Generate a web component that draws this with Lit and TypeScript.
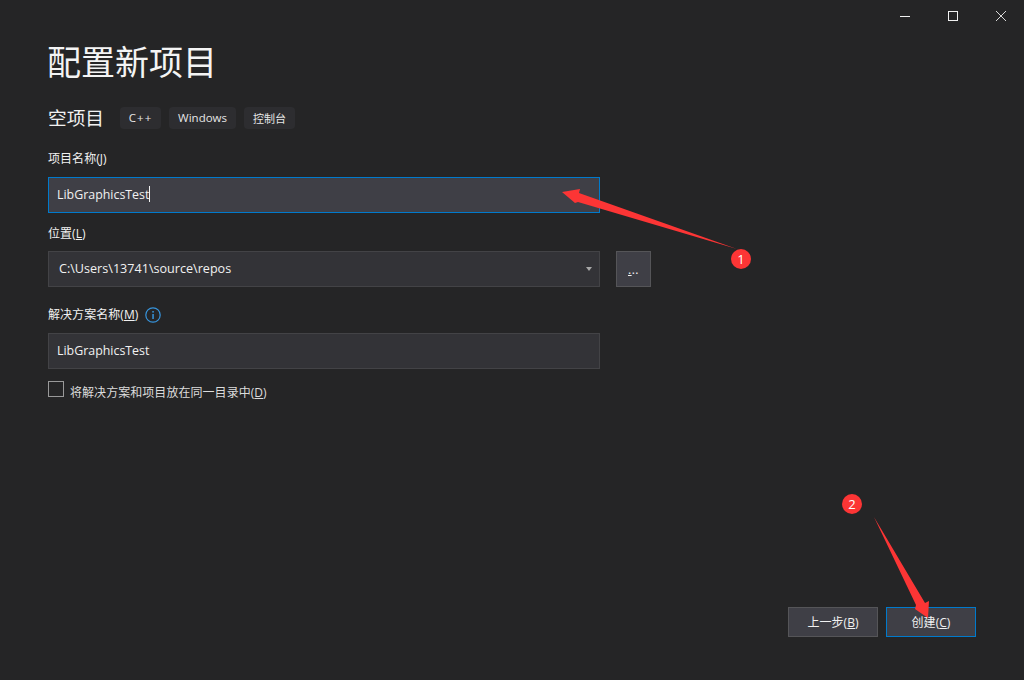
import { LitElement, html, css, svg } from "lit";
import { customElement } from "lit/decorators.js";

@customElement("app-root")
export class AppRoot extends LitElement {
  static styles = css`
    :host {
      display: block;
      position: relative;
      width: 1024px;
      height: 680px;
      overflow: hidden;
      background: #252526;
      color: #f1f1f1;
      font-family: "Open Sans", "Noto Sans CJK SC", sans-serif;
      font-size: 12px;
    }
    * { box-sizing: border-box; }
    .cjk { font-family: "Noto Sans CJK SC", sans-serif; }
    .page {
      display: flex;
      flex-direction: column;
      height: 680px;
    }
    .winbar {
      display: flex;
      justify-content: flex-end;
      height: 31px;
      padding: 11px 18px 0 0;
      gap: 38px;
    }
    .winbar svg { width: 10px; height: 10px; display: block; }
    .body {
      flex: 1;
      display: flex;
      flex-direction: column;
      padding: 0 0 0 48px;
    }
    h1 {
      margin: 0 0 0 -1px;
      height: 60px;
      line-height: 60px;
      font-size: 34px;
      font-weight: 400;
      color: #f4f4f4;
    }
    .sub {
      display: flex;
      align-items: center;
      height: 22px;
      margin-top: 16px;
      gap: 8px;
    }
    .sub .name {
      font-size: 18.7px;
      font-weight: 400;
      margin-right: 8px;
      line-height: 22px;
      margin-top: -2px;
    }
    .tag {
      height: 22px;
      padding: 0 9px;
      display: flex;
      align-items: center;
      justify-content: center;
      background: #2d2d30;
      border-radius: 4px;
      font-size: 11.5px;
      color: #e6e6e6;
      margin-top: -1px;
    }
    .tag.plus { width: 41px; letter-spacing: 1px; padding: 0; }
    .tag.win { width: 67px; padding: 0; }
    .tag.ctl { width: 51px; padding: 0; font-size: 11px; }
    .label {
      display: flex;
      align-items: center;
      gap: 6px;
      font-size: 12px;
      color: #f1f1f1;
      line-height: 18px;
      height: 18px;
    }
    .label > span, .check > span:last-child, .btn { letter-spacing: 0.05px; }
    .l1 { margin-top: 21px; }
    .l2 { margin-top: 12px; }
    .l3 { margin-top: 19px; gap: 7px; }
    .field {
      width: 552px;
      height: 36px;
      display: flex;
      align-items: center;
      padding: 0 8px 2px;
      background: #333337;
      border: 1px solid #434346;
      font-size: 12.4px;
      color: #f1f1f1;
    }
    .f1 { margin-top: 9px; background: #3f3f46; border-color: #007acc; }
    .f2 { margin-top: 8px; padding: 0 7px 2px 10px; justify-content: space-between; font-size: 12.6px; }
    .f3 { margin-top: 9px; }
    .caret { width: 1px; height: 16px; background: #f1f1f1; }
    .path-row { display: flex; gap: 16px; }
    .tri { width: 0; height: 0; border: 3.5px solid transparent; border-top: 4px solid #a8a8a8; border-bottom: 0; margin-top: 2px; }
    .browse {
      width: 35px;
      height: 36px;
      margin-top: 8px;
      background: #3f3f46;
      border: 1px solid #555558;
      display: flex;
      align-items: flex-end;
      justify-content: center;
      padding-bottom: 10px;
      font-size: 12px;
      line-height: 12px;
      letter-spacing: 0.5px;
      color: #f1f1f1;
    }
    .info { width: 16px; height: 16px; display: block; }
    .check {
      display: flex;
      align-items: center;
      margin-top: 12px;
      height: 16px;
      gap: 6px;
      color: #dcdcdc;
    }
    .check > span:last-child { margin-top: 5px; }
    .box { width: 16px; height: 16px; border: 1px solid #999; }
    .actions {
      display: flex;
      gap: 8px;
      justify-content: flex-end;
      padding: 0 48px 43px 0;
    }
    .btn {
      width: 90px;
      height: 30px;
      display: flex;
      align-items: center;
      justify-content: center;
      background: #3f3f46;
      border: 1px solid #555558;
      font-size: 12px;
      color: #f1f1f1;
      white-space: pre;
    }
    .btn.primary { border-color: #007acc; }
    .spacer { flex: 1; }
    .overlay {
      position: absolute;
      inset: 0;
      width: 1024px;
      height: 680px;
      pointer-events: none;
    }
    .overlay text {
      font-family: "Open Sans", sans-serif;
      font-size: 13px;
      fill: #fff;
      text-anchor: middle;
    }
  `;

  render() {
    return html`
      <div class="page">
        <div class="winbar">
          <svg viewBox="0 0 10 10"><path d="M0 5.5H10" stroke="#f1f1f1" fill="none"/></svg>
          <svg viewBox="0 0 10 10"><rect x=".5" y=".5" width="9" height="9" stroke="#f1f1f1" fill="none"/></svg>
          <svg viewBox="0 0 10 10"><path d="M0 0L10 10M10 0L0 10" stroke="#d8d8d8" fill="none"/></svg>
        </div>
        <div class="body">
          <h1 class="cjk">配置新项目</h1>
          <div class="sub">
            <span class="name cjk">空项目</span>
            <span class="tag plus">C++</span>
            <span class="tag win">Windows</span>
            <span class="tag ctl cjk">控制台</span>
          </div>
          <div class="label l1"><span>项目名称(<u>J</u>)</span></div>
          <div class="field f1"><span>LibGraphicsTest</span><span class="caret"></span></div>
          <div class="label l2"><span>位置(<u>L</u>)</span></div>
          <div class="path-row">
            <div class="field f2"><span>C:\\Users\\13741\\source\\repos</span><span class="tri"></span></div>
            <div class="browse"><span><u>.</u>..</span></div>
          </div>
          <div class="label l3">
            <span>解决方案名称(<u>M</u>)</span>
            <svg class="info" viewBox="0 0 16 16">
              <circle cx="8" cy="8" r="7.2" fill="none" stroke="#3794dc" stroke-width="1.2"/>
              <rect x="7.3" y="7" width="1.5" height="5" fill="#3794dc"/>
              <rect x="7.3" y="4" width="1.5" height="1.6" fill="#3794dc"/>
            </svg>
          </div>
          <div class="field f3">LibGraphicsTest</div>
          <div class="check">
            <span class="box"></span>
            <span>将解决方案和项目放在同一目录中(<u>D</u>)</span>
          </div>
          <div class="spacer"></div>
          <div class="actions">
            <div class="btn"><span>上一步(<u>B</u>)</span></div>
            <div class="btn primary"><span>创建(<u>C</u>)</span></div>
          </div>
        </div>
      </div>
      <svg class="overlay" viewBox="0 0 1024 680">
        ${svg`
          <polygon points="737,249 578,202 575,203 562,192 580,189 579,193" fill="#fc3535"/>
          <circle cx="741" cy="259" r="10" fill="#fc3535"/>
          <text x="741" y="264">1</text>
          <polygon points="874,517 925,603 929,601 928,618 915,609 916,605" fill="#fc3535"/>
          <circle cx="852" cy="504" r="10" fill="#fc3535"/>
          <text x="852" y="509">2</text>
        `}
      </svg>
    `;
  }
}
